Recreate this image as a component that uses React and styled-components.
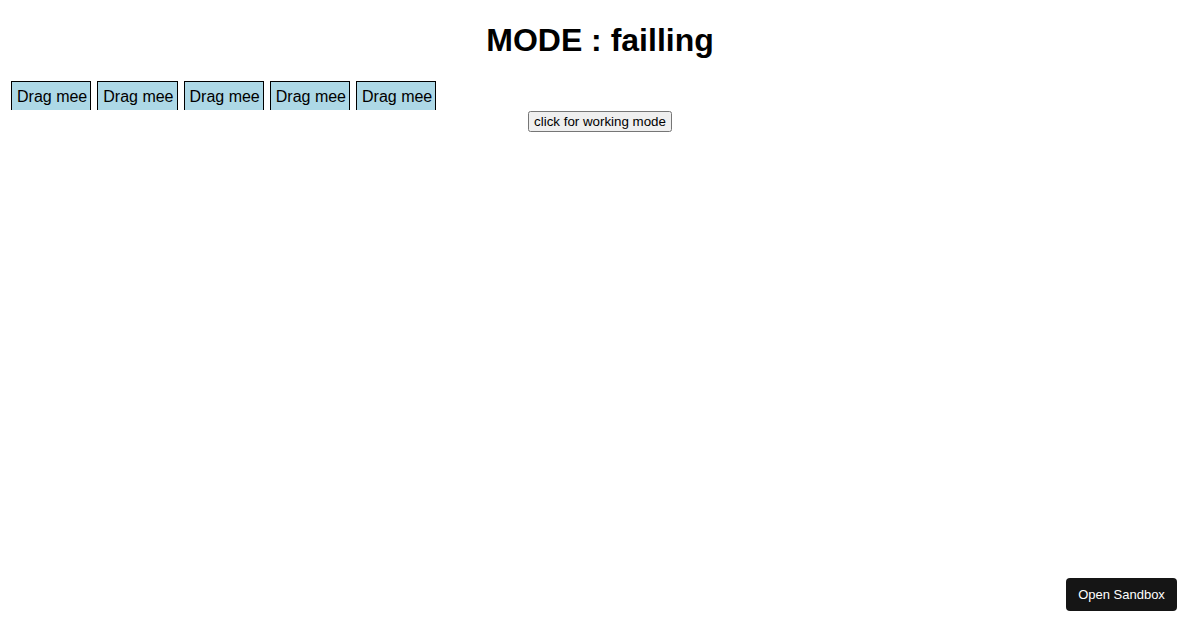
import React, { useState } from "react";
import styled, { createGlobalStyle } from "styled-components";

const GlobalStyle = createGlobalStyle`
    body {
        margin: 8px;
        font-family: "Liberation Sans", Arial, sans-serif;
        background: #ffffff;
        color: #000000;
    }
`;

const Title = styled.h1`
    text-align: center;
    font-size: 32px;
    font-weight: bold;
    margin: 14.44px 0 21.44px;
`;

const DragRow = styled.div`
    display: flex;
    align-items: flex-start;
    height: 29px;
    overflow: hidden;
`;

const DragItem = styled.div`
    margin: 0 3px;
    padding: 6px 3px 12px 5px;
    border: 1px solid #000000;
    background: lightblue;
    font-size: 16px;
    white-space: nowrap;
    cursor: grab;
`;

const Center = styled.div`
    text-align: center;
`;

const ModeButton = styled.button`
    font-family: "Liberation Sans", Arial, sans-serif;
    font-size: 13.33px;
    padding: 1px 4px;
    margin-top: 1px;
`;

const SandboxButton = styled.button`
    position: fixed;
    right: 23px;
    bottom: 19px;
    width: 111px;
    height: 33px;
    border: none;
    border-radius: 4px;
    background: #151515;
    color: #ffffff;
    font-family: "Liberation Sans", Arial, sans-serif;
    font-size: 13px;
    cursor: pointer;
`;

export default function App() {
    const [working, setWorking] = useState(false);
    const items = [1, 2, 3, 4, 5];
    return (
        <>
            <GlobalStyle />
            <Title>MODE : {working ? "working" : "failling"}</Title>
            <DragRow>
                {items.map((id) => (
                    <DragItem key={id} draggable>
                        Drag mee
                    </DragItem>
                ))}
            </DragRow>
            <Center>
                <ModeButton onClick={() => setWorking(!working)}>
                    click for {working ? "failling" : "working"} mode
                </ModeButton>
            </Center>
            <SandboxButton>Open Sandbox</SandboxButton>
        </>
    );
}
